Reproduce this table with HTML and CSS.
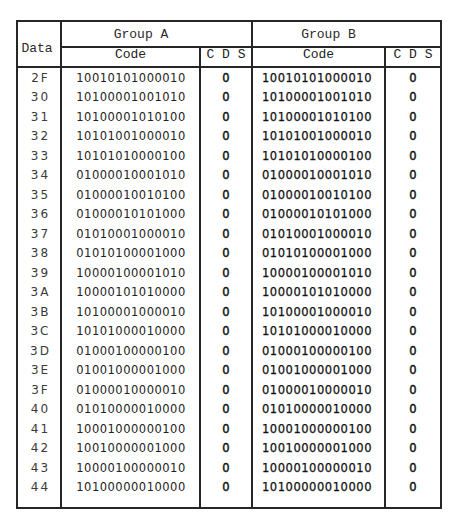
FILE: index.html
```html
<!DOCTYPE html>
<html>
<head>
<meta charset="utf-8">
<link rel="stylesheet" href="styles.css">
</head>
<body>
<div class="table">
  <div class="cell h-data">Data</div>
  <div class="cell h-group ga">Group A</div>
  <div class="cell h-group gb">Group B</div>
  <div class="cell h-sub">Code</div>
  <div class="cell h-sub">C D S</div>
  <div class="cell h-sub">Code</div>
  <div class="cell h-sub">C D S</div>

  <div class="cell col data">
    <div>2F</div><div>30</div><div>31</div><div>32</div><div>33</div><div>34</div><div>35</div><div>36</div><div>37</div><div>38</div><div>39</div><div>3A</div><div>3B</div><div>3C</div><div>3D</div><div>3E</div><div>3F</div><div>40</div><div>41</div><div>42</div><div>43</div><div>44</div>
  </div>
  <div class="cell col code-a">
    <div>10010101000010</div><div>10100001001010</div><div>10100001010100</div><div>10101001000010</div><div>10101010000100</div><div>01000010001010</div><div>01000010010100</div><div>01000010101000</div><div>01010001000010</div><div>01010100001000</div><div>10000100001010</div><div>10000101010000</div><div>10100001000010</div><div>10101000010000</div><div>01000100000100</div><div>01001000001000</div><div>01000010000010</div><div>01010000010000</div><div>10001000000100</div><div>10010000001000</div><div>10000100000010</div><div>10100000010000</div>
  </div>
  <div class="cell col cds">
    <div>0</div><div>0</div><div>0</div><div>0</div><div>0</div><div>0</div><div>0</div><div>0</div><div>0</div><div>0</div><div>0</div><div>0</div><div>0</div><div>0</div><div>0</div><div>0</div><div>0</div><div>0</div><div>0</div><div>0</div><div>0</div><div>0</div>
  </div>
  <div class="cell col code-b">
    <div>10010101000010</div><div>10100001001010</div><div>10100001010100</div><div>10101001000010</div><div>10101010000100</div><div>01000010001010</div><div>01000010010100</div><div>01000010101000</div><div>01010001000010</div><div>01010100001000</div><div>10000100001010</div><div>10000101010000</div><div>10100001000010</div><div>10101000010000</div><div>01000100000100</div><div>01001000001000</div><div>01000010000010</div><div>01010000010000</div><div>10001000000100</div><div>10010000001000</div><div>10000100000010</div><div>10100000010000</div>
  </div>
  <div class="cell col cds">
    <div>0</div><div>0</div><div>0</div><div>0</div><div>0</div><div>0</div><div>0</div><div>0</div><div>0</div><div>0</div><div>0</div><div>0</div><div>0</div><div>0</div><div>0</div><div>0</div><div>0</div><div>0</div><div>0</div><div>0</div><div>0</div><div>0</div>
  </div>
</div>
</body>
</html>
```

FILE: styles.css
```css
html, body {
  margin: 0;
  padding: 0;
  background: #ffffff;
}

body {
  font-family: "Liberation Mono", "DejaVu Sans Mono", monospace;
  font-size: 13px;
  color: #1c1c1c;
}

.table {
  display: grid;
  grid-template-columns: 42px 137px 50px 131px 54px;
  grid-template-rows: 24px 18px 439px;
  gap: 2px;
  padding: 2px;
  background: #262626;
  width: max-content;
  margin: 20px 0 0 16px;
}

.cell {
  background: #ffffff;
  display: flex;
  align-items: center;
  justify-content: center;
  line-height: 1;
}

.h-data {
  grid-row: 1 / span 2;
  padding-top: 9px;
  padding-right: 4px;
  color: #2a2a2a;
}

.h-group {
  grid-column: span 2;
  color: #2a2a2a;
}

.ga { padding-right: 31px; }
.gb { padding-right: 36px; }

.h-sub {
  padding-bottom: 6px;
  color: #222;
}

.col {
  flex-direction: column;
  justify-content: flex-start;
  padding-top: 0.5px;
  font-family: "DejaVu Sans", "Liberation Sans", sans-serif;
  font-size: 11.5px;
}

.col > div {
  height: 19.5px;
  line-height: 19.5px;
}

.data {
  color: #3a3a3a;
  font-size: 12px;
  letter-spacing: 2px;
  padding-left: 3px;
}

.code-a {
  color: #222;
  letter-spacing: 0.5px;
  padding-left: 1px;
}

.code-b {
  color: #111;
  letter-spacing: 0.55px;
  -webkit-text-stroke: 0.25px #111;
  padding-right: 3px;
}

.cds {
  color: #111;
  -webkit-text-stroke: 0.45px #111;
}
```
